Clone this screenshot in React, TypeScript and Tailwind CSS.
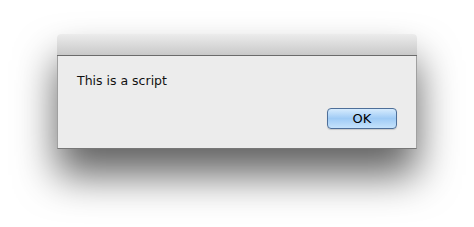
import React from "react";

export default function App() {
  return (
    <div className="w-[474px] h-[227px] bg-white overflow-hidden pt-[34px] pl-[57px]" style={{ fontFamily: '"DejaVu Sans", "Liberation Sans", sans-serif' }}>
      <div className="w-[360px] flex flex-col rounded-t-[4px] shadow-[0_26px_40px_rgba(0,0,0,0.62)]">
        <div className="h-[22px] rounded-t-[4px] bg-gradient-to-b from-[#ececec] to-[#c9c9c9] border-b border-[#6b6b6b]" />
        <div className="h-[93px] bg-[#ececec] border-x border-b border-[#a0a0a0] border-b-[#777] flex flex-col">
          <div className="pl-[19px] pt-[17px] text-[12.5px] leading-[16px] text-[#111]">This is a script</div>
          <div className="flex justify-end pr-[19px] mt-[19px]">
            <button className="w-[70px] h-[21px] rounded-[4px] border border-[#4e6f99] bg-gradient-to-b from-[#d6ebfd] via-[#9fcbf5] to-[#c5e2fb] text-[13px] leading-[19px] text-black shadow-[0_1px_1px_rgba(0,0,0,0.15)]" style={{ fontFamily: '"DejaVu Sans", sans-serif' }}>
              OK
            </button>
          </div>
        </div>
      </div>
    </div>
  );
}
